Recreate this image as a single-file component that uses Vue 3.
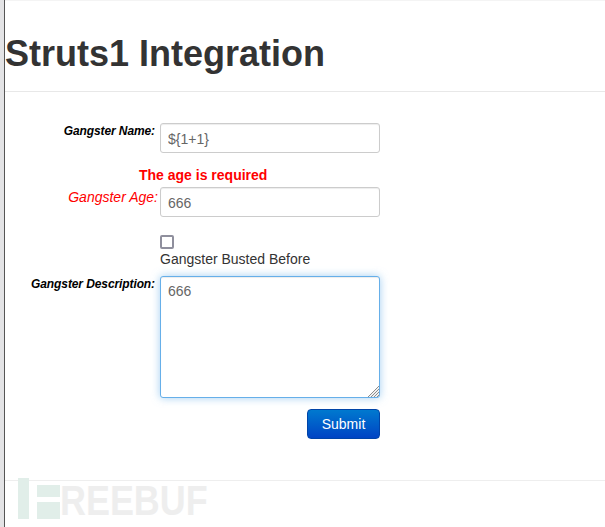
<template>
  <div class="page">
    <div class="rail"></div>
    <div class="main">
      <div class="topline"></div>
      <header class="head"><h1>Struts1 Integration</h1></header>
      <form class="form" @submit.prevent>
        <div class="row">
          <label class="lab">Gangster Name:</label>
          <input class="field" value="${1+1}" />
        </div>
        <div class="err">The age is required</div>
        <div class="row age">
          <label class="lab bad">Gangster Age:</label>
          <input class="field" value="666" />
        </div>
        <div class="check">
          <span class="box"></span>
          <span class="check-text">Gangster Busted Before</span>
        </div>
        <div class="row desc">
          <label class="lab">Gangster Description:</label>
          <div class="area-wrap">
            <textarea class="area">666</textarea>
            <svg class="grip" width="12" height="12" viewBox="0 0 12 12">
              <path d="M12 1 1 12M12 4 4 12M12 7 7 12M12 10 10 12" stroke="#8c8c8c" stroke-width="1" fill="none" />
              <path d="M12 2.5 2.5 12M12 5.5 5.5 12M12 8.5 8.5 12" stroke="#e2e2e2" stroke-width="1" fill="none" />
            </svg>
          </div>
        </div>
        <div class="actions"><button class="submit">Submit</button></div>
      </form>
      <div class="foot">
        <div class="mark">
          <div class="mark-i"></div>
          <div class="mark-f"><span class="f1"></span><span class="f2"></span></div>
          <span class="mark-text">REEBUF</span>
        </div>
      </div>
    </div>
  </div>
</template>

<script setup>
</script>

<style>
html, body { margin: 0; background: #fff; }
</style>

<style scoped>
.page { display: flex; width: 605px; height: 527px; overflow: hidden; font-family: "Liberation Sans", Arial, sans-serif; color: #333; }
.rail { width: 4px; flex: none; background: #e3e3e5; border-right: 1px solid #555; }
.main { flex: 1; min-width: 0; }
.topline { height: 1px; background: #f4f4f4; }
.head { height: 90px; border-bottom: 1px solid #e8e8e8; }
h1 { margin: 0; padding-top: 33px; font-size: 36px; line-height: 40px; font-weight: 700; color: #333; }
.form { padding-top: 31px; }
.row { display: flex; align-items: flex-start; }
.lab { width: 150px; flex: none; text-align: right; font-size: 12px; letter-spacing: -.1px; line-height: 14px; font-weight: 700; font-style: italic; color: #000; padding-top: 1px; }
.lab.bad { width: 153px; margin-right: -3px; font-size: 14px; letter-spacing: 0; font-weight: 400; color: #f00; line-height: 20px; padding-top: 0; }
.field, .area { display: block; box-sizing: border-box; width: 220px; margin-left: 5px; border: 1px solid #ccc; border-radius: 3px; padding: 7px 7px 5px; font: 14px/20px "Liberation Sans", Arial, sans-serif; color: #666; background: #fff; outline: none; box-shadow: inset 0 1px 1px rgba(0,0,0,.075); }
.field { height: 30px; }
.err { margin: 12px 0 0 134px; font-size: 14px; line-height: 20px; font-weight: 700; color: #f00; }
.age { margin-top: 2px; }
.check { margin: 18px 0 0 155px; }
.box { display: block; width: 14px; height: 14px; box-sizing: border-box; border: 2px solid #8f8f9d; border-radius: 2px; background: #fff; }
.check-text { display: block; font-size: 14px; line-height: 20px; }
.desc { margin-top: 7px; }
.area-wrap { position: relative; height: 122px; }
.area { height: 122px; padding-top: 4px; border-color: #66afe9; box-shadow: inset 0 1px 1px rgba(0,0,0,.075), 0 0 8px rgba(102,175,233,.6); resize: none; }
.grip { position: absolute; right: 1px; bottom: 1px; }
.actions { width: 375px; display: flex; justify-content: flex-end; margin-top: 11px; }
.submit { width: 73px; height: 30px; border: 1px solid #0044a8; border-radius: 4px; background: linear-gradient(#0079cf, #0044c4); color: #fff; font: 14px/20px "Liberation Sans", Arial, sans-serif; padding: 0; }
.foot { margin-top: 41px; border-top: 1px solid #eee; position: relative; }
.mark { position: absolute; left: 13px; top: -3px; display: flex; align-items: flex-start; }
.mark-i { width: 11px; height: 41px; background: #e1eee9; }
.mark-f { margin: 7px 0 0 8px; width: 23px; height: 34px; display: flex; flex-direction: column; justify-content: space-between; }
.f1 { height: 12px; background: #e1eee9; }
.f2 { height: 17px; background: #e1eee9; }
.mark-text { margin: 5px 0 0 0; font-size: 42px; line-height: 36px; font-weight: 700; color: #eeeeee; transform: scaleX(.855); transform-origin: left top; }
</style>
